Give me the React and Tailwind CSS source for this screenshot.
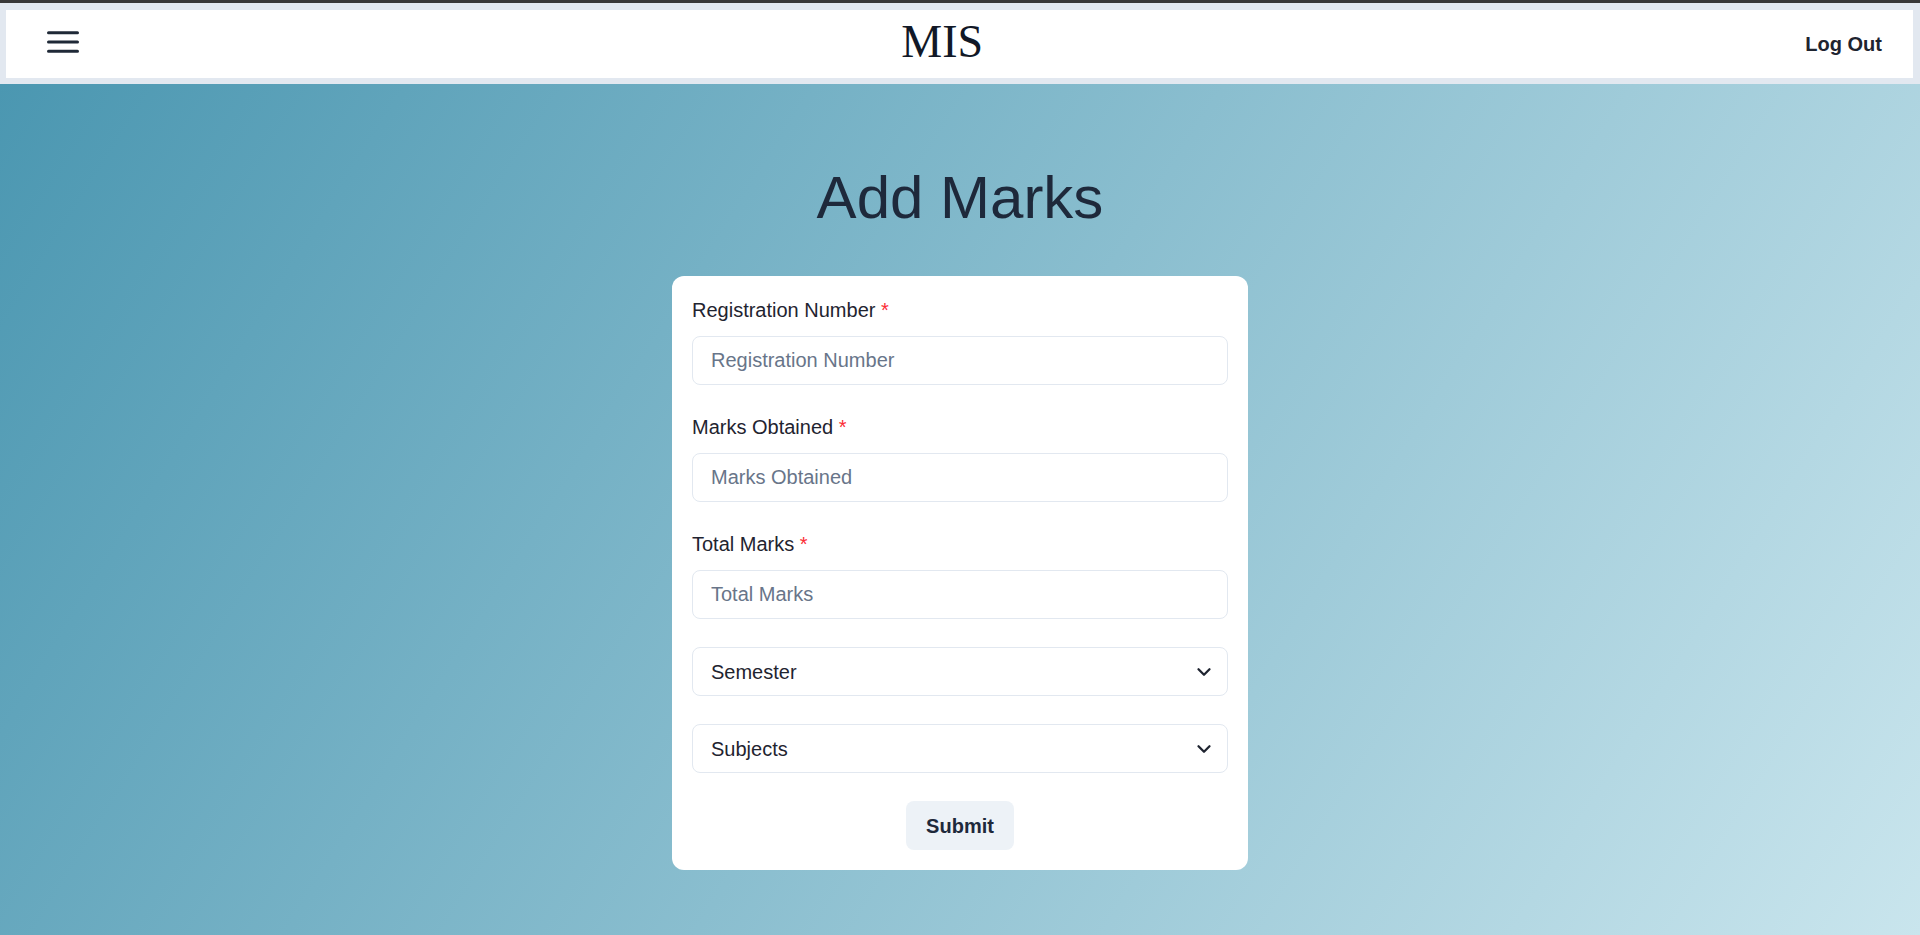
import React, { useState } from "react";
import { ChevronDown } from "lucide-react";

const fields = [
  { name: "regNo", label: "Registration Number" },
  { name: "marks", label: "Marks Obtained" },
  { name: "total", label: "Total Marks" },
];

const selects = [
  { name: "semester", label: "Semester" },
  { name: "subject", label: "Subjects" },
];

const Header = () => {
  return (
    <div className="border-t-[3px] border-[#383838] bg-[#e2e8f0] pt-[7px] pb-[6px] pl-[6px] pr-[7px]">
      <div className="flex h-[68px] items-center justify-between bg-white pl-[41px] pr-[31px]">
        <button className="mb-[5px]" aria-label="menu">
          <svg width="32" height="22" viewBox="0 0 32 22" fill="none">
            <path
              d="M1.5 1.75h29M1.5 11h29M1.5 20.25h29"
              stroke="#1f2937"
              strokeWidth="3"
              strokeLinecap="round"
            />
          </svg>
        </button>
        <h1 className="mb-[4px] font-['Liberation_Serif','Times_New_Roman',serif] text-[46px] leading-none text-[#111827]">
          MIS
        </h1>
        <button className="text-xl font-bold leading-7 text-[#1e2430]">
          Log Out
        </button>
      </div>
    </div>
  );
};

const App = () => {
  const [form, setForm] = useState({ regNo: "", marks: "", total: "", semester: "", subject: "" });

  const handleChange = (e) => {
    setForm({ ...form, [e.target.name]: e.target.value });
  };

  return (
    <div className="flex min-h-screen flex-col font-['Liberation_Sans',Arial,sans-serif]">
      <Header />
      <main className="flex flex-1 flex-col items-center bg-[linear-gradient(122deg,#4b97b1,#c9e5ed)] pt-[84px] pb-10">
        <h2 className="mb-12 text-6xl leading-none text-[#1e293b]">Add Marks</h2>

        <form
          className="flex w-[576px] flex-col gap-7 rounded-xl bg-white p-5"
          onSubmit={(e) => e.preventDefault()}
        >
          {fields.map((field) => (
            <div key={field.name} className="flex flex-col">
              <label className="mb-3 text-xl leading-7 text-[#1f2430]">
                {field.label} <span className="text-red-500">*</span>
              </label>
              <input
                type="text"
                name={field.name}
                value={form[field.name]}
                onChange={handleChange}
                placeholder={field.label}
                className="h-[49px] rounded-lg border border-[#e2e8f0] px-[18px] text-xl text-[#1f2430] outline-none placeholder:text-[#687589]"
              />
            </div>
          ))}

          {selects.map((sel) => (
            <div key={sel.name} className="relative">
              <select
                name={sel.name}
                value={form[sel.name]}
                onChange={handleChange}
                className="h-[49px] w-full appearance-none rounded-lg border border-[#e2e8f0] bg-white px-[18px] text-xl text-[#1f2430] outline-none"
              >
                <option value="">{sel.label}</option>
              </select>
              <ChevronDown
                size={22}
                strokeWidth={2.5}
                className="pointer-events-none absolute right-[13px] top-1/2 -translate-y-1/2 text-[#1f2430]"
              />
            </div>
          ))}

          <button
            type="submit"
            className="mx-auto h-[49px] rounded-lg bg-[#edf2f7] px-5 text-xl font-bold text-[#1e293b]"
          >
            Submit
          </button>
        </form>
      </main>
    </div>
  );
};

export default App;
